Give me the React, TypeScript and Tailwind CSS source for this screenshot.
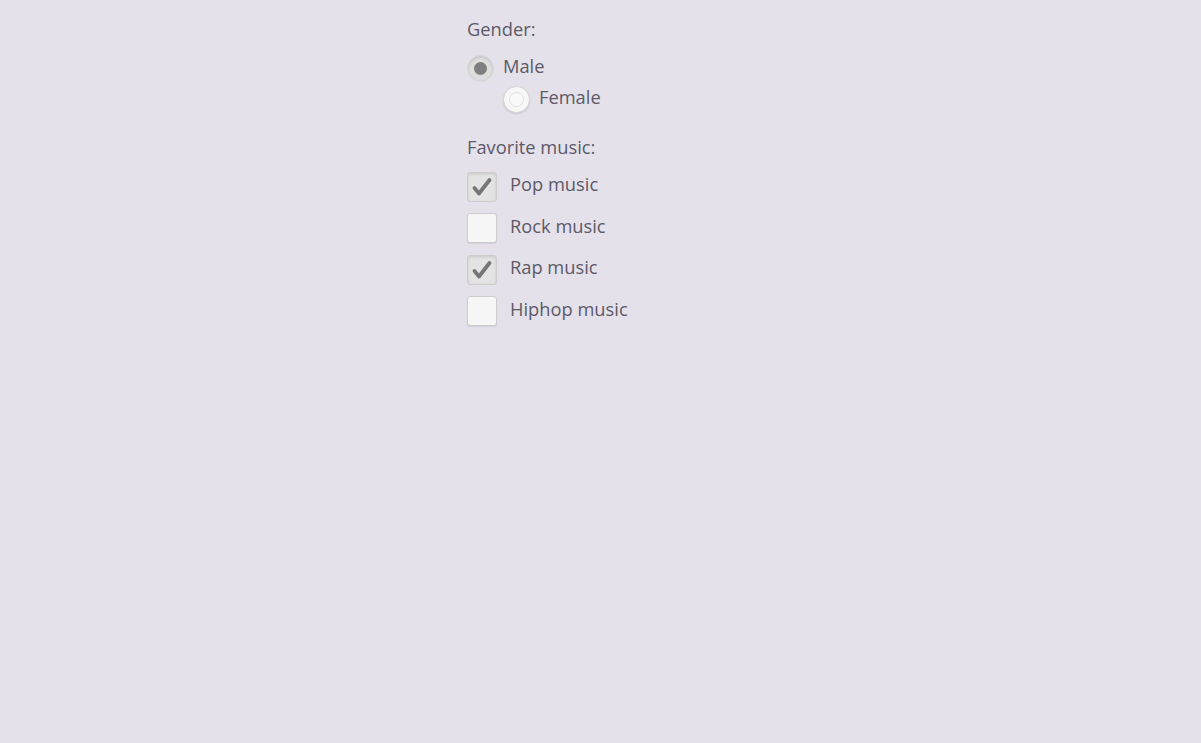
import React from "react";

function Radio({ checked, label, indent }: { checked: boolean; label: string; indent?: boolean }) {
  return (
    <div className={`flex items-center h-[31px] ${indent ? "ml-[36px]" : ""}`}>
      <span
        className={`relative flex items-center justify-center w-[27px] h-[27px] rounded-full border border-[#d6d6d6] ${
          checked ? "bg-[#dedede] shadow-[inset_0_1px_3px_rgba(0,0,0,0.15)]" : "bg-[#f7f7f7] shadow-[0_1px_2px_rgba(0,0,0,0.12)]"
        }`}
      >
        {checked ? (
          <span className="w-[13px] h-[13px] rounded-full bg-[#7f7f7f]" />
        ) : (
          <span className="w-[15px] h-[15px] rounded-full border border-[#e2e2e2] bg-[#f9f9f9]" />
        )}
      </span>
      <span className="ml-[9px] -mt-[6px]">{label}</span>
    </div>
  );
}

function Check({ checked, label }: { checked: boolean; label: string }) {
  return (
    <div className="flex items-center h-[41.5px]">
      <span
        className={`flex items-center justify-center w-[30px] h-[30px] rounded-[3px] border border-[#cdcdcd] ${
          checked
            ? "bg-[#e3e3e3] shadow-[inset_0_1px_3px_rgba(0,0,0,0.12)]"
            : "bg-[#f6f6f6] shadow-[0_1px_1px_rgba(0,0,0,0.08)]"
        }`}
      >
        {checked && (
          <svg width="22" height="20" viewBox="0 0 22 20">
            <path d="M3.5 11 L8 16.5 L18.5 3" fill="none" stroke="#767676" strokeWidth="3.8" strokeLinecap="round" strokeLinejoin="round" />
          </svg>
        )}
      </span>
      <span className="ml-[13px] -mt-[6px]">{label}</span>
    </div>
  );
}

export default function App() {
  return (
    <div
      className="min-h-[743px] w-full bg-[#e4e1eb] text-[#5c5a67] text-[18.3px]"
      style={{ fontFamily: '"Open Sans", "Noto Sans", sans-serif' }}
    >
      <div className="ml-[467px] pt-[16px] flex flex-col">
        <div className="leading-[26px]">Gender:</div>
        <div className="mt-[11px]">
          <Radio checked label="Male" />
          <Radio checked={false} label="Female" indent />
        </div>
        <div className="mt-[19px] leading-[26px]">Favorite music:</div>
        <div className="mt-[6px]">
          <Check checked label="Pop music" />
          <Check checked={false} label="Rock music" />
          <Check checked label="Rap music" />
          <Check checked={false} label="Hiphop music" />
        </div>
      </div>
    </div>
  );
}
